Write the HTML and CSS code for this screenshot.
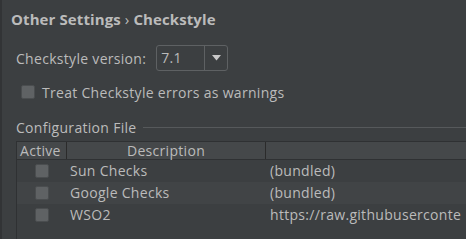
FILE: index.html
```html
<!DOCTYPE html>
<html lang="en">

<head>
    <meta charset="UTF-8">
    <meta name="viewport" content="width=device-width, initial-scale=1.0">
    <title>Checkstyle</title>
    <link rel="stylesheet" href="styles.css">
</head>

<body>
    <div class="pagina">
        <div class="titulo">Other Settings <span class="sep">›</span> Checkstyle</div>

        <div class="fila version">
            <span>Checkstyle version:</span>
            <div class="combo">
                <span class="valor">7.1</span>
                <span class="flecha">
                    <svg width="9" height="6" viewBox="0 0 9 6"><path d="M0 0 H9 L4.5 5.5 Z" fill="#c8c8c8"/></svg>
                </span>
            </div>
        </div>

        <div class="fila opcion">
            <span class="check"></span>
            <span>Treat Checkstyle errors as warnings</span>
        </div>

        <div class="fila grupo">
            <span>Configuration File</span>
            <span class="linea"></span>
        </div>

        <div class="tabla">
            <div class="cabecera">
                <div class="col activo">Active</div>
                <div class="col desc">Description</div>
                <div class="col ruta"></div>
            </div>
            <div class="registro">
                <div class="col activo"><span class="check"></span></div>
                <div class="col desc">Sun Checks</div>
                <div class="col ruta">(bundled)</div>
            </div>
            <div class="registro par">
                <div class="col activo"><span class="check"></span></div>
                <div class="col desc">Google Checks</div>
                <div class="col ruta">(bundled)</div>
            </div>
            <div class="registro">
                <div class="col activo"><span class="check"></span></div>
                <div class="col desc">WSO2</div>
                <div class="col ruta">https://raw.githubuserconte</div>
            </div>
        </div>
    </div>
</body>

</html>
```

FILE: styles.css
```css
* {
    margin: 0;
    padding: 0;
    box-sizing: border-box;
}

body {
    background-color: #3c3f41;
    color: #bbbbbb;
    font-family: "Open Sans", "DejaVu Sans", sans-serif;
    font-size: 14px;
    letter-spacing: 0.3px;
    overflow: hidden;
}

.pagina {
    height: 239px;
    border-left: 2px solid #323436;
    overflow: hidden;
}

.titulo {
    height: 38px;
    line-height: 38px;
    padding-left: 9px;
    font-weight: bold;
    font-size: 15px;
    letter-spacing: 0.1px;
    white-space: nowrap;
}

.titulo .sep {
    font-weight: normal;
}

.fila {
    display: flex;
    align-items: center;
    height: 26px;
    padding-left: 14px;
    white-space: nowrap;
}

.version {
    margin-top: 7px;
}

.combo {
    display: flex;
    height: 26px;
    width: 72px;
    margin-left: 10px;
    border: 1px solid #5e6163;
    border-radius: 3px;
}

.combo .valor {
    width: 48px;
    padding-left: 4px;
    line-height: 24px;
    border-right: 1px solid #5e6163;
}

.combo .flecha {
    flex: 1;
    display: flex;
    align-items: center;
    justify-content: center;
}

.opcion {
    margin-top: 8px;
}

.opcion .check {
    margin-left: 5px;
    margin-right: 7px;
}

.check {
    display: inline-block;
    width: 14px;
    height: 14px;
    border: 1px solid #4a4d4f;
    border-radius: 2px;
    background-color: #5f6264;
}

.grupo {
    margin-top: 9px;
}

.linea {
    flex: 1;
    height: 1px;
    margin-left: 7px;
    background-color: #56595b;
}

.tabla {
    margin-left: 14px;
    margin-top: 1px;
    width: 460px;
    height: 120px;
    border-left: 1px solid #2f3133;
    border-top: 1px solid #2f3133;
}

.cabecera,
.registro {
    display: grid;
    grid-template-columns: 50px 199px 1fr;
    white-space: nowrap;
}

.cabecera {
    height: 18px;
    line-height: 17px;
    background-color: #45484a;
    border-bottom: 1px solid #2f3133;
}

.cabecera .col {
    text-align: center;
}

.cabecera .activo {
    text-align: left;
    padding-left: 3px;
    border-right: 1px solid #2b2b2b;
}

.cabecera .desc {
    border-right: 1px solid #2b2b2b;
}

.registro {
    height: 22px;
    line-height: 22px;
}

.registro.par {
    background-color: #414446;
}

.registro .activo {
    display: flex;
    align-items: center;
    justify-content: center;
}

.registro .desc {
    padding-left: 3px;
}

.registro .ruta {
    padding-left: 4px;
    overflow: hidden;
}
```
